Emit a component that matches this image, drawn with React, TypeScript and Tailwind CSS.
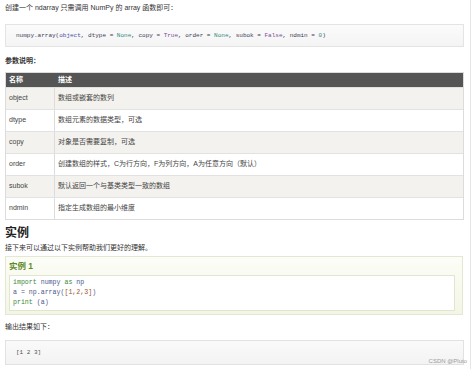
import type React from 'react';

const SANS = "font-['Liberation_Sans','Noto_Sans_CJK_SC',sans-serif]";
const MONO = "font-['Liberation_Mono','DejaVu_Sans_Mono',monospace]";

// ── Data ────────────────────────────────────────────────────────────────────
const params = [
  { name: 'object', desc: '数组或嵌套的数列' },
  { name: 'dtype', desc: '数组元素的数据类型，可选' },
  { name: 'copy', desc: '对象是否需要复制，可选' },
  { name: 'order', desc: '创建数组的样式，C为行方向，F为列方向，A为任意方向（默认）' },
  { name: 'subok', desc: '默认返回一个与基类类型一致的数组' },
  { name: 'ndmin', desc: '指定生成数组的最小维度' },
];

function Tok({ c, children }: { c: string; children: React.ReactNode }) {
  return <span className={c}>{children}</span>;
}

// ── Signature code block ────────────────────────────────────────────────────
function Signature() {
  const pln = 'text-[#3b3b55]';
  const typ = 'text-[#4a4fa8]';
  const lit = 'text-[#2f8a7c]';
  const kwd = 'text-[#7a4a9a]';
  return (
    <div className="mt-[10px] h-[23px] flex items-center pl-[10px] border border-[#e4e4e4] bg-gradient-to-b from-[#fbfbfb] to-[#f4f4f4]">
      <pre className={`${MONO} text-[6px] leading-[10px] whitespace-pre`}>
        <Tok c={pln}>numpy.array(</Tok>
        <Tok c={typ}>object</Tok>
        <Tok c={pln}>, dtype = </Tok>
        <Tok c={lit}>None</Tok>
        <Tok c={pln}>, copy = </Tok>
        <Tok c={kwd}>True</Tok>
        <Tok c={pln}>, order = </Tok>
        <Tok c={lit}>None</Tok>
        <Tok c={pln}>, subok = </Tok>
        <Tok c={kwd}>False</Tok>
        <Tok c={pln}>, ndmin = </Tok>
        <Tok c={lit}>0</Tok>
        <Tok c={pln}>)</Tok>
      </pre>
    </div>
  );
}

// ── Parameter table ─────────────────────────────────────────────────────────
function ParamTable() {
  return (
    <div className="mt-[5px] border border-[#dcdcdc] text-[7px]">
      <div className="flex h-[14px] items-center bg-[#555555] text-white font-bold">
        <div className="w-[49px] pl-[3px]">名称</div>
        <div className="pl-[3px]">描述</div>
      </div>
      {params.map((p, i) => (
        <div
          key={p.name}
          className={`flex h-[22px] items-stretch text-[#444] border-t border-[#e2e2e2] ${
            i % 2 === 0 ? 'bg-[#f3f2ee]' : 'bg-white'
          }`}
        >
          <div className="w-[49px] pl-[3px] flex items-center border-r border-[#dcdcdc]">{p.name}</div>
          <div className="pl-[3px] flex items-center">{p.desc}</div>
        </div>
      ))}
    </div>
  );
}

// ── Example box ─────────────────────────────────────────────────────────────
function ExampleBox() {
  const kw = 'text-[#3c8a3c]';
  const pl = 'text-[#4c5a8c]';
  const num = 'text-[#a0522d]';
  return (
    <div className="mt-[2px] mr-[1px] h-[59px] pl-[3px] pr-[7px] pb-[3px] flex flex-col border border-[#e3e8d3] bg-gradient-to-b from-[#fcfdf7] to-[#f3f6e6]">
      <div className="h-[18px] flex items-center text-[8.5px] font-semibold text-[#5e8a2a]">实例 1</div>
      <div className="flex-1 border border-[#e1e7cd] bg-white pl-[3px] pt-[2px]">
        <pre className={`${MONO} text-[6.6px] leading-[10px] whitespace-pre`}>
          <Tok c={kw}>import</Tok>
          <Tok c={pl}> numpy </Tok>
          <Tok c={kw}>as</Tok>
          <Tok c={pl}> np</Tok>
          {'\n'}
          <Tok c={pl}>a = np.array(</Tok>
          <Tok c={num}>[1,2,3]</Tok>
          <Tok c={pl}>)</Tok>
          {'\n'}
          <Tok c={kw}>print</Tok>
          <Tok c={pl}> (a)</Tok>
        </pre>
      </div>
    </div>
  );
}

// ── Page ────────────────────────────────────────────────────────────────────
export default function App() {
  return (
    <div className={`${SANS} relative w-[474px] h-[369px] overflow-hidden bg-white`}>
      <div className="w-[471px] h-full border-r border-[#e6e6e6] pl-[5px] pr-[6px] pt-[2px] flex flex-col text-[#333]">
        <p className="h-[12px] leading-[12px] text-[7px]">创建一个 ndarray 只需调用 NumPy 的 array 函数即可：</p>

        <Signature />

        <p className="mt-[8px] h-[12px] leading-[12px] text-[7px] font-bold">参数说明：</p>

        <ParamTable />

        <h2 className="mt-[5px] h-[16px] leading-[16px] text-[12px] font-bold text-[#222]">实例</h2>
        <p className="mt-[1px] h-[12px] leading-[12px] text-[7px]">接下来可以通过以下实例帮助我们更好的理解。</p>

        <ExampleBox />

        <p className="mt-[6px] h-[12px] leading-[12px] text-[7px]">输出结果如下：</p>

        <div className="mt-[7px] h-[25px] flex items-center pl-[10px] border border-[#e2e2e2] bg-gradient-to-b from-[#fafafa] to-[#f3f3f3]">
          <pre className={`${MONO} text-[6px] text-[#555]`}>[1 2 3]</pre>
        </div>
      </div>

      {/* watermark */}
      <span className="absolute right-[7px] bottom-[3px] text-[6px] text-[#9a9a9a]">CSDN @Pluto</span>
    </div>
  );
}
